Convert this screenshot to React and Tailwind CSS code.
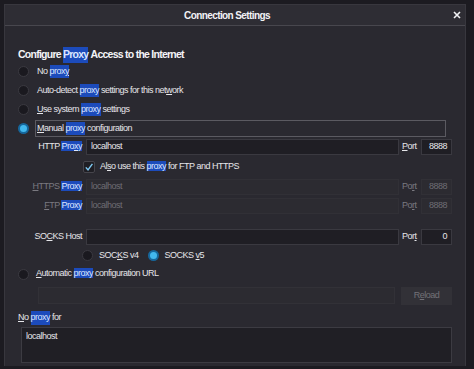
import React from "react";

const FONT = "font-['Liberation_Sans',Arial,sans-serif]";

const Hl = ({ children }) => (
  <span className="bg-[#1c4bbb] text-[#dce6ff]">{children}</span>
);
const U = ({ children }) => (
  <span className="underline underline-offset-[1px] decoration-[0.5px]">{children}</span>
);

function Radio({ checked }) {
  if (checked) {
    return (
      <div className="w-[11px] h-[11px] shrink-0 rounded-full bg-[#16679c] flex items-center justify-center">
        <div className="w-[7px] h-[7px] rounded-full bg-[#42b8ee]" />
      </div>
    );
  }
  return (
    <div className="w-[11px] h-[11px] shrink-0 rounded-full bg-[#1a191f] border border-[#3b3a41]" />
  );
}

function Field({ value, disabled, align = "left", className = "" }) {
  return (
    <div
      className={
        "h-[16px] flex items-center border px-[4px] text-[9px] " +
        (disabled
          ? "bg-[#2c2b31] border-[#313036] text-[#6e6d74] "
          : "bg-[#1f1e24] border-[#3a3940] text-[#e6e6ea] ") +
        (align === "right" ? "justify-end " : "") +
        className
      }
    >
      {value}
    </div>
  );
}

function ProxyRow({ label, value, port, disabled, className = "" }) {
  return (
    <div className={"flex items-center h-[16px] " + className}>
      <div
        className={
          "w-[64px] shrink-0 text-right text-[9px] " +
          (disabled ? "text-[#7a7980]" : "text-[#e6e6ea]")
        }
      >
        {label}
      </div>
      <Field value={value} disabled={disabled} className="flex-1 ml-[4px]" />
      <div
        className={
          "mx-[3px] text-[9px] w-[15px] " +
          (disabled ? "text-[#7a7980]" : "text-[#e6e6ea]")
        }
      >
        {port.label}
      </div>
      <Field value={port.value} disabled={disabled} align="right" className="w-[31px] ml-[1px]" />
    </div>
  );
}

function RadioRow({ checked, focus, children }) {
  return (
    <div className="flex items-center h-[19px]">
      <Radio checked={checked} />
      <div
        className={
          "ml-[6px] h-[17px] flex items-center pl-[1px] text-[9px] text-[#e6e6ea] border " +
          (focus ? "flex-1 mr-[6px] border-[#5b5a61]" : "border-transparent")
        }
      >
        {children}
      </div>
    </div>
  );
}

export default function App() {
  return (
    <div className={"w-[474px] h-[369px] overflow-hidden bg-[#1c1b21] pt-[4px] pl-[4px] tracking-[-0.5px] " + FONT}>
      <div className="w-[462px] h-[362px] bg-[#2a2930] border border-[#38373e] border-b-0 flex flex-col">
        {/* header */}
        <div className="h-[21px] shrink-0 flex items-center bg-[#2e2d34] border-b border-[#48474e]">
          <div className="flex-1 text-center text-[10px] tracking-[-0.6px] font-bold text-[#f2f2f5]">
            Connection Settings
          </div>
          <div className="w-[15px] mr-[1px] flex items-center justify-center">
            <svg width="8" height="8" viewBox="0 0 8 8">
              <path d="M1 1 L7 7 M7 1 L1 7" stroke="#f2f2f5" strokeWidth="1.6" />
            </svg>
          </div>
        </div>

        {/* body */}
        <div className="flex-1 flex flex-col pl-[13px] pr-[13px] pt-[22px]">
          <div className="h-[14px] shrink-0 flex items-center text-[10.5px] tracking-[-0.75px] font-bold text-[#f4f4f7]">
            Configure&nbsp;<Hl>Proxy</Hl>&nbsp;Access to the Internet
          </div>

          <RadioRow>
            No&nbsp;<Hl>prox<U>y</U></Hl>
          </RadioRow>
          <RadioRow>
            Auto-detect&nbsp;<Hl>proxy</Hl>&nbsp;settings for this net<U>w</U>ork
          </RadioRow>
          <RadioRow>
            <U>U</U>se system&nbsp;<Hl>proxy</Hl>&nbsp;settings
          </RadioRow>
          <RadioRow checked focus>
            <U>M</U>anual&nbsp;<Hl>proxy</Hl>&nbsp;configuration
          </RadioRow>

          <ProxyRow
            className="mt-[1px]"
            label={<>HTTP <Hl>Pro<U>x</U>y</Hl></>}
            value="localhost"
            port={{ label: <><U>P</U>ort</>, value: "8888" }}
          />

          <div className="h-[24px] shrink-0 flex items-center pl-[65px]">
            <div className="w-[12px] h-[12px] shrink-0 rounded-[2px] bg-[#1f1e24] border border-[#46454c] flex items-center justify-center">
              <svg width="10" height="10" viewBox="0 0 10 10">
                <path d="M1.8 5.4 L4 7.8 L8.4 1.8" fill="none" stroke="#7fcaf3" strokeWidth="1.4" />
              </svg>
            </div>
            <div className="ml-[5px] text-[9px] text-[#e6e6ea]">
              Al<U>s</U>o use this&nbsp;<Hl>proxy</Hl>&nbsp;for FTP and HTTPS
            </div>
          </div>

          <ProxyRow
            disabled
            label={<><U>H</U>TTPS <Hl>Proxy</Hl></>}
            value="localhost"
            port={{ label: <>Po<U>r</U>t</>, value: "8888" }}
          />
          <ProxyRow
            disabled
            className="mt-[3px]"
            label={<><U>F</U>TP <Hl>Proxy</Hl></>}
            value="localhost"
            port={{ label: <>Po<U>r</U>t</>, value: "8888" }}
          />
          <ProxyRow
            className="mt-[15px]"
            label={<>SO<U>C</U>KS Host</>}
            value=""
            port={{ label: <>Por<U>t</U></>, value: "0" }}
          />

          <div className="h-[21px] shrink-0 flex items-center pl-[64px] text-[9px] text-[#e6e6ea]">
            <Radio />
            <div className="ml-[6px]">SOC<U>K</U>S v4</div>
            <div className="ml-[9px]"><Radio checked /></div>
            <div className="ml-[6px]">SOCKS <U>v</U>5</div>
          </div>

          <div className="flex items-center h-[16px] shrink-0">
            <Radio />
            <div className="ml-[7px] text-[9px] text-[#e6e6ea]">
              <U>A</U>utomatic&nbsp;<Hl>proxy</Hl>&nbsp;configuration URL
            </div>
          </div>

          <div className="flex items-start h-[18px] shrink-0 mt-[5px] pl-[20px]">
            <div className="flex-1 h-[17px] bg-[#2c2b31] border border-[#323137]" />
            <div className="ml-[6px] w-[51px] h-[18px] bg-[#323137] flex items-center justify-center text-[9px] text-[#727177]">
              R<U>e</U>load
            </div>
          </div>

          <div className="h-[14px] shrink-0 mt-[6px] flex items-center text-[9px] text-[#e6e6ea]">
            <U>N</U>o&nbsp;<Hl>proxy</Hl>&nbsp;for
          </div>

          <div className="ml-[3px] mt-[2px] h-[36px] shrink-0 bg-[#201f25] border border-[#3c3b42] px-[4px] pt-[2px] text-[9px] text-[#e6e6ea]">
            localhost
          </div>
        </div>
      </div>
    </div>
  );
}
